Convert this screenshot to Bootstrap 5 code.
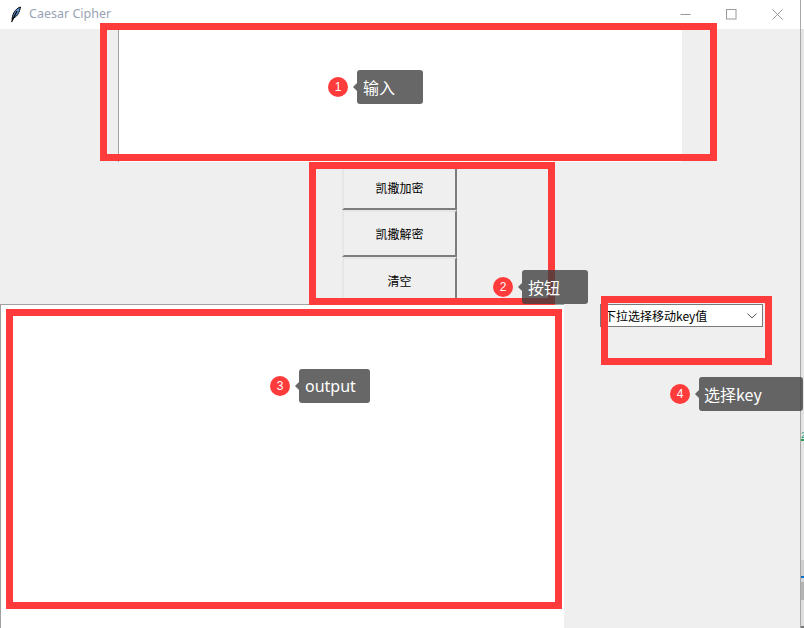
<!DOCTYPE html>
<html lang="zh">
<head>
<meta charset="utf-8">
<link href="https://cdn.jsdelivr.net/npm/bootstrap@5.3.0/dist/css/bootstrap.min.css" rel="stylesheet">
<style>
html,body{margin:0;height:100%;overflow:hidden;background:#fff}
body{width:804px;height:628px;position:relative;font-family:"Liberation Sans","Noto Sans CJK SC",sans-serif}
.tk-window{width:800px;height:628px;background:#efefef;flex:none}
.tk-title{height:29px;background:#fff;font-size:12.500px;color:#9aa3b5;font-family:"Noto Sans","Noto Sans CJK SC",sans-serif;padding-left:10px;gap:7px}
.tk-ctrl{margin-left:auto}
.tk-ctrl span{width:46px;display:flex;justify-content:center}
.tk-input{width:564px;height:133px;background:#fff;border:0;border-left:1px solid #a0a0a0;border-radius:0;padding:0;display:block;margin:0 0 0 118px;resize:none;outline:0;box-shadow:none}
.tk-btns{width:115px;margin:6px 0 0 342px}
.tk-btn{height:47px;width:115px;padding:0;background:#efefef;border:0;border-top:2px solid #e6e6e6;border-left:2px solid #e6e6e6;border-right:2px solid #7d7d7d;border-bottom:2px solid #7d7d7d;border-radius:0;font-size:12px;color:#000;font-family:"Noto Sans CJK SC",sans-serif;display:flex;align-items:center;justify-content:center}
.tk-btn:first-child{height:42px;border-top:0}
.tk-output{width:564px;height:324px;background:#fff;border-top:1px solid #a0a0a0;border-left:1px solid #a0a0a0}
.tk-select{width:163px;height:23px;margin-left:36px;background:#fff;border:1px solid #7a7a7a;font-size:12px;color:#000;padding-left:3px;font-family:"Noto Sans CJK SC",sans-serif}
.tk-select svg{margin-left:auto;margin-right:5px}
.edge{width:4px;height:628px;flex:none;border-left:1px solid #a8a8a8}
.edge-a{height:402px;background:#e4e4e4}
.edge-top{height:29px;background:#fff}
.edge-glyph{height:8px;background:#e4e4e4;color:#0f9d8a;font-size:9px;line-height:8px;overflow:hidden}
.edge-green{height:2px;background:#2e9e5b}
.edge-b{height:119px;background:#e4e4e4}
.edge-c{height:16px;background:#cfcfcf}
.edge-blue{height:2px;background:#0a6fc2}
.edge-d{height:4px;background:#d5d5d5}
.edge-e{height:18px;background:#b5b5b5}
.edge-f{height:26px;background:#dedede}
.edge-g{height:2px;background:#777}
.mk-box{position:absolute;border:7px solid #ff3b3b}
.mk-b1{left:100px;top:23px;width:617px;height:138px}
.mk-b2{left:309px;top:162px;width:246px;height:143px}
.mk-b3{left:6px;top:309px;width:556px;height:300px}
.mk-b4{left:601px;top:296px;width:171px;height:69px}
.mk-tag{position:absolute;height:34px;gap:9px}
.mk-t1{left:328px;top:70px}
.mk-t2{left:493px;top:270px}
.mk-t3{left:270px;top:369px}
.mk-t4{left:670px;top:377px}
.mk-num{width:20px;height:20px;border-radius:50%;background:#ff3b3b;color:#fff;font-size:12px;line-height:20px;text-align:center;font-family:"Liberation Sans",sans-serif}
.mk-label{position:relative;height:34px;line-height:34px;padding:0 6px;background:rgba(60,60,60,.78);color:#fff;border-radius:3px;font-size:16px;font-family:"Noto Sans CJK SC",sans-serif}
.mk-label::before{content:"";position:absolute;left:-4px;top:13px;border-style:solid;border-width:4px 4px 4px 0;border-color:transparent rgba(60,60,60,.78) transparent transparent}
.mk-l1,.mk-l2{width:66px}
.mk-l3{width:71px;font-family:"Noto Sans",sans-serif}
.mk-l4{width:104px;padding-left:5px}
</style>
</head>
<body class="d-flex">
<div class="tk-window">
  <div class="tk-title d-flex align-items-center">
    <svg width="12" height="17" viewBox="0 0 12 17"><path d="M10.500 1C7 2 3.500 5.500 2.500 10.500L2 13.500L4.500 11.500C7.500 10 9.500 6 10.500 1Z" fill="#5b95d6" stroke="#000" stroke-width="1"/><path d="M7 5L1.500 16" stroke="#000" stroke-width="1.200" fill="none"/></svg>
    <span>Caesar Cipher</span>
    <div class="tk-ctrl d-flex align-items-center">
      <span><svg width="11" height="11" viewBox="0 0 11 11"><path d="M0.500 5.500H10.500" stroke="#9a9a9a"/></svg></span>
      <span><svg width="11" height="11" viewBox="0 0 11 11"><rect x="0.500" y="0.500" width="9.500" height="9.500" fill="none" stroke="#9a9a9a"/></svg></span>
      <span><svg width="11" height="11" viewBox="0 0 11 11"><path d="M0.500 0.500L10.500 10.500M10.500 0.500L0.500 10.500" stroke="#9a9a9a"/></svg></span>
    </div>
  </div>
  <textarea class="tk-input form-control" aria-label="输入"></textarea>
  <div class="tk-btns d-flex flex-column">
    <button class="tk-btn btn" type="button">凯撒加密</button>
    <button class="tk-btn btn" type="button">凯撒解密</button>
    <button class="tk-btn btn" type="button">清空</button>
  </div>
  <div class="d-flex align-items-start">
    <div class="tk-output"></div>
    <div class="tk-select d-flex align-items-center"><span>下拉选择移动key值</span>
      <svg width="10" height="6" viewBox="0 0 10 6"><path d="M0.500 0.500L5 5L9.500 0.500" fill="none" stroke="#555"/></svg>
    </div>
  </div>
</div>
<div class="edge d-flex flex-column">
  <div class="edge-top"></div>
  <div class="edge-a"></div>
  <div class="edge-glyph">2</div>
  <div class="edge-green"></div>
  <div class="edge-b"></div>
  <div class="edge-c"></div>
  <div class="edge-blue"></div>
  <div class="edge-d"></div>
  <div class="edge-e"></div>
  <div class="edge-f"></div>
  <div class="edge-g"></div>
</div>
<div class="mk-box mk-b1"></div>
<div class="mk-box mk-b2"></div>
<div class="mk-box mk-b3"></div>
<div class="mk-box mk-b4"></div>
<div class="mk-tag mk-t1 d-flex align-items-center"><span class="mk-num">1</span><span class="mk-label mk-l1">输入</span></div>
<div class="mk-tag mk-t2 d-flex align-items-center"><span class="mk-num">2</span><span class="mk-label mk-l2">按钮</span></div>
<div class="mk-tag mk-t3 d-flex align-items-center"><span class="mk-num">3</span><span class="mk-label mk-l3">output</span></div>
<div class="mk-tag mk-t4 d-flex align-items-center"><span class="mk-num">4</span><span class="mk-label mk-l4">选择key</span></div>
<script src="https://cdn.jsdelivr.net/npm/bootstrap@5.3.0/dist/js/bootstrap.bundle.min.js"></script>
</body>
</html>
